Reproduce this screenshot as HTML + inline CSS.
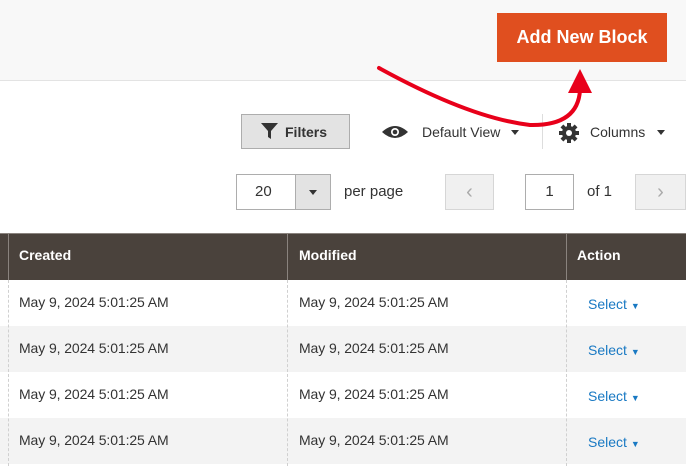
<!DOCTYPE html><html><head><style>
body{margin:0;width:686px;height:466px;overflow:hidden;background:#fff;font-family:"Liberation Sans",sans-serif;position:relative;color:#333}
.a{position:absolute}
.top{left:0;top:0;width:686px;height:80px;background:#f8f8f8;border-bottom:1px solid #e3e3e3}
.btn{left:497px;top:13px;width:170px;height:49px;background:#e04f1f;color:#fff;font-weight:bold;font-size:18px;text-align:center;line-height:49px}
.t{font-size:14px}
.hd{left:0;top:233px;width:686px;height:47px;background:#4a423c;border-top:1px solid #8a837e;box-sizing:border-box}
.h{color:#fff;font-weight:bold;font-size:14px;top:247px}
.g{left:0;width:686px;height:46px;background:#f3f3f3}
.vl{width:0;border-left:1px dashed #d0d0d0;top:280px;height:186px}
.hv{width:1px;background:#8a837e;top:233px;height:47px}
.c{font-size:14px;letter-spacing:-0.1px}
.s{color:#1979c3;font-size:14px}
</style></head><body>
<div class="a top"></div>
<div class="a btn">Add New Block</div>
<div class="a" style="left:241px;top:114px;width:109px;height:35px;background:#e3e3e3;border:1px solid #adadad;box-sizing:border-box"></div>
<svg class="a" style="left:260px;top:122px" width="20" height="18"><path d="M1 1H18L11 9V17L8 15V9Z" fill="#333"/></svg>
<div class="a t" style="left:285px;top:124px;font-weight:bold">Filters</div>
<svg class="a" style="left:381px;top:124px" width="28" height="16"><path d="M1 8Q14 -4 27 8Q14 20 1 8Z" fill="#333"/><circle cx="14" cy="8" r="4" fill="#fff"/><circle cx="14" cy="8" r="2.3" fill="#333"/></svg>
<div class="a t" style="left:422px;top:124px">Default View</div>
<div class="a" style="left:511px;top:130px;border:4px solid transparent;border-top:5px solid #333"></div>
<div class="a" style="left:542px;top:114px;width:1px;height:35px;background:#ddd"></div>
<svg class="a" style="left:558px;top:122px" width="22" height="22" viewBox="0 0 22 22"><g fill="#333"><circle cx="11" cy="11" r="7"/><rect x="9" y="1" width="4" height="20"/><rect x="1" y="9" width="20" height="4"/><rect x="9" y="1" width="4" height="20" transform="rotate(45 11 11)"/><rect x="9" y="1" width="4" height="20" transform="rotate(-45 11 11)"/></g><circle cx="11" cy="11" r="3" fill="#fff"/></svg>
<div class="a t" style="left:590px;top:124px">Columns</div>
<div class="a" style="left:657px;top:130px;border:4px solid transparent;border-top:5px solid #333"></div>
<div class="a" style="left:236px;top:174px;width:95px;height:36px;border:1px solid #adadad;box-sizing:border-box"></div>
<div class="a" style="left:295px;top:174px;width:36px;height:36px;background:#e3e3e3;border:1px solid #adadad;box-sizing:border-box"></div>
<div class="a" style="left:309px;top:190px;border:4px solid transparent;border-top:5px solid #333"></div>
<div class="a" style="left:255px;top:183px;font-size:15px">20</div>
<div class="a" style="left:344px;top:183px;font-size:15px">per page</div>
<div class="a" style="left:445px;top:174px;width:49px;height:36px;background:#f0f0f0;border:1px solid #d6d6d6;box-sizing:border-box;color:#aaa;text-align:center;line-height:34px;font-size:20px">&lsaquo;</div>
<div class="a" style="left:525px;top:174px;width:49px;height:36px;border:1px solid #adadad;box-sizing:border-box;text-align:center;line-height:34px;font-size:15px">1</div>
<div class="a" style="left:587px;top:183px;font-size:15px">of 1</div>
<div class="a" style="left:635px;top:174px;width:51px;height:36px;background:#f0f0f0;border:1px solid #d6d6d6;box-sizing:border-box;color:#aaa;text-align:center;line-height:34px;font-size:20px">&rsaquo;</div>

<div class="a hd"></div>
<div class="a g" style="top:326px"></div>
<div class="a g" style="top:418px"></div>
<div class="a hv" style="left:8px"></div><div class="a hv" style="left:287px"></div><div class="a hv" style="left:566px"></div>
<div class="a vl" style="left:8px"></div><div class="a vl" style="left:287px"></div><div class="a vl" style="left:566px"></div>
<div class="a h" style="left:19px">Created</div>
<div class="a h" style="left:299px">Modified</div>
<div class="a h" style="left:577px">Action</div>

<div class="a c" style="left:19px;top:294px">May 9, 2024 5:01:25 AM</div><div class="a c" style="left:299px;top:294px">May 9, 2024 5:01:25 AM</div><div class="a s" style="left:588px;top:296px">Select <span style="font-size:9px">&#9660;</span></div>
<div class="a c" style="left:19px;top:340px">May 9, 2024 5:01:25 AM</div><div class="a c" style="left:299px;top:340px">May 9, 2024 5:01:25 AM</div><div class="a s" style="left:588px;top:342px">Select <span style="font-size:9px">&#9660;</span></div>
<div class="a c" style="left:19px;top:386px">May 9, 2024 5:01:25 AM</div><div class="a c" style="left:299px;top:386px">May 9, 2024 5:01:25 AM</div><div class="a s" style="left:588px;top:388px">Select <span style="font-size:9px">&#9660;</span></div>
<div class="a c" style="left:19px;top:432px">May 9, 2024 5:01:25 AM</div><div class="a c" style="left:299px;top:432px">May 9, 2024 5:01:25 AM</div><div class="a s" style="left:588px;top:434px">Select <span style="font-size:9px">&#9660;</span></div>

<svg class="a" style="left:0;top:0" width="686" height="140"><path d="M379 68Q470 118 530 125Q578 126 580 90" fill="none" stroke="#e8001a" stroke-width="4" stroke-linecap="round"/><path d="M580 69L592 93L568 93Z" fill="#e8001a"/></svg>
</body></html>
